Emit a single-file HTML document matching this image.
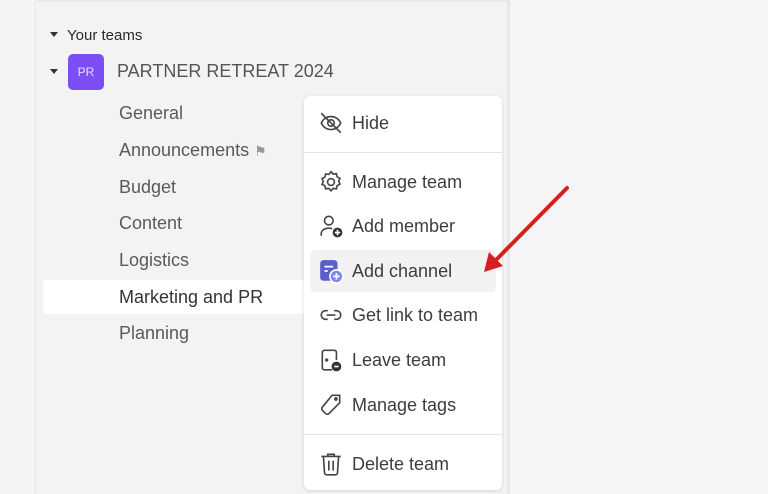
<!DOCTYPE html>
<html><head><meta charset="utf-8"><style>
*{margin:0;padding:0;box-sizing:border-box}
body{width:768px;height:494px;overflow:hidden;background:#f4f4f4;font-family:"Liberation Sans",sans-serif;position:relative}
.abs{position:absolute}
.left{left:0;top:0;width:36px;height:494px;background:#f4f4f4;border-right:1px solid #e6e6e6}
.side{left:37px;top:0;width:470px;height:494px;background:#f3f3f3;border-top:2px solid #e9e9e9}
.rightp{left:507px;top:0;width:261px;height:494px;background:#f5f5f5;border-left:3px solid #e8e8e8}
.t{position:absolute;white-space:nowrap;color:#5a5a5a;font-size:18px}
.menu{left:304px;top:96px;width:198px;height:394px;background:#fff;border-radius:6px;box-shadow:0 1px 4px rgba(0,0,0,.12)}
.mi{position:absolute;left:48px;font-size:18px;color:#3d3d3d;white-space:nowrap}
.ic{position:absolute;left:14px;width:26px;height:26px}
.div{position:absolute;left:0;width:198px;height:1px;background:#e4e4e4}
</style></head><body>
<div class="abs left"></div>
<div class="abs side"></div>
<div class="abs rightp"></div>
<div class="abs" style="left:50px;top:32px;width:0;height:0;border-left:4px solid transparent;border-right:4px solid transparent;border-top:5px solid #333"></div>
<div class="t" style="left:67px;top:27px;font-size:15px;color:#2a2a2a">Your teams</div>
<div class="abs" style="left:50px;top:69px;width:0;height:0;border-left:4px solid transparent;border-right:4px solid transparent;border-top:5px solid #333"></div>
<div class="abs" style="left:68px;top:54px;width:36px;height:36px;border-radius:5px;background:#7b4ff5;color:#e8dcff;font-size:12px;line-height:36px;text-align:center">PR</div>
<div class="t" style="left:117px;top:61px;font-size:18px;color:#555">PARTNER RETREAT 2024</div>
<div class="t" style="left:119px;top:103px">General</div>
<div class="t" style="left:119px;top:140px">Announcements <span style="color:#999;font-size:14px">&#9873;</span></div>
<div class="t" style="left:119px;top:177px">Budget</div>
<div class="t" style="left:119px;top:213px">Content</div>
<div class="t" style="left:119px;top:250px">Logistics</div>
<div class="abs" style="left:43px;top:280px;width:262px;height:34px;background:#fff;border-radius:3px"></div>
<div class="t" style="left:119px;top:287px;color:#333">Marketing and PR</div>
<div class="t" style="left:119px;top:323px">Planning</div>

<div class="abs menu">
 <svg class="ic" style="top:14px" viewBox="0 0 24 24" fill="none" stroke="#444" stroke-width="1.5"><path d="M3 12c2-4 5.5-6 9-6s7 2 9 6c-2 4-5.5 6-9 6s-7-2-9-6z"/><circle cx="12" cy="12" r="3"/><path d="M3 3l18 18"/></svg>
 <div class="mi" style="top:17px">Hide</div>
 <div class="div" style="top:56px"></div>
 <svg class="ic" style="top:73px" viewBox="0 0 24 24" fill="none" stroke="#444" stroke-width="1.5"><path d="M12 2.5l2 2.2 3-.4.6 2.9 2.7 1.4-1.2 2.7 1.2 2.7-2.7 1.4-.6 2.9-3-.4-2 2.2-2-2.2-3 .4-.6-2.9L3.7 14.3 4.9 11.6 3.7 8.9l2.7-1.4.6-2.9 3 .4z"/><circle cx="12" cy="12" r="3.2"/></svg>
 <div class="mi" style="top:76px">Manage team</div>
 <svg class="ic" style="top:117px" viewBox="0 0 24 24" fill="none" stroke="#444" stroke-width="1.5"><circle cx="10" cy="7" r="4"/><path d="M3 21v-2c0-2.5 2.5-5 7-5 1.5 0 2.5.3 3 .5"/><circle cx="18" cy="18" r="4.5" fill="#333" stroke="none"/><path d="M18 15.5v5M15.5 18h5" stroke="#fff"/></svg>
 <div class="mi" style="top:120px">Add member</div>
 <div class="abs" style="left:6px;top:154px;width:186px;height:42px;background:#f2f2f2;border-radius:5px"></div>
 <svg class="ic" style="top:162px" viewBox="0 0 24 24"><rect x="2" y="2" width="16" height="19" rx="3" fill="#5b5fc7"/><path d="M6 8h8M6 12h3" stroke="#fff" stroke-width="1.6"/><circle cx="17" cy="17" r="6" fill="#7f85f5" stroke="#fff" stroke-width="1.5"/><path d="M17 14v6M14 17h6" stroke="#fff" stroke-width="1.6"/></svg>
 <div class="mi" style="top:165px">Add channel</div>
 <svg class="ic" style="top:206px" viewBox="0 0 24 24" fill="none" stroke="#444" stroke-width="1.5"><path d="M9 8H7a4 4 0 000 8h2M15 8h2a4 4 0 010 8h-2M8 12h8"/></svg>
 <div class="mi" style="top:209px">Get link to team</div>
 <svg class="ic" style="top:251px" viewBox="0 0 24 24" fill="none" stroke="#444" stroke-width="1.5"><path d="M13 21H6a2 2 0 01-2-2V5a2 2 0 012-2h9a2 2 0 012 2v7"/><circle cx="8" cy="12" r=".8" fill="#444"/><circle cx="17" cy="18" r="4.5" fill="#333" stroke="none"/><path d="M15 18h4" stroke="#fff"/></svg>
 <div class="mi" style="top:254px">Leave team</div>
 <svg class="ic" style="top:296px" viewBox="0 0 24 24" fill="none" stroke="#444" stroke-width="1.5"><path d="M13 3h7v7L10 20a2 2 0 01-2.8 0L4 16.8a2 2 0 010-2.8z"/><circle cx="16.5" cy="6.5" r="1"/></svg>
 <div class="mi" style="top:299px">Manage tags</div>
 <div class="div" style="top:338px"></div>
 <svg class="ic" style="top:355px" viewBox="0 0 24 24" fill="none" stroke="#444" stroke-width="1.5"><path d="M3 5h18M9 5V3h6v2M5 5l1 15a2 2 0 002 2h8a2 2 0 002-2l1-15M10 9v9M14 9v9"/></svg>
 <div class="mi" style="top:358px">Delete team</div>
</div>

<svg class="abs" style="left:0;top:0" width="768" height="494"><path d="M567 188L493 263" stroke="#d42020" stroke-width="4" stroke-linecap="round"/><path d="M484 272l5-20 14 14z" fill="#d42020"/></svg>
</body></html>
